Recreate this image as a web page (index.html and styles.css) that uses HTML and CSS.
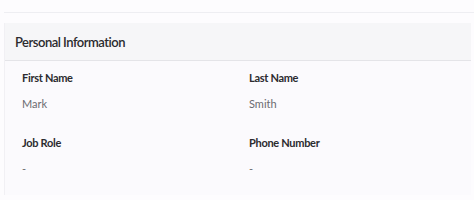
FILE: index.html
```html
<!DOCTYPE html>
<html lang="en">

<head>
    <meta charset="UTF-8">
    <meta name="viewport" content="width=device-width, initial-scale=1.0">
    <title>Profile</title>
    <link rel="stylesheet" href="styles.css">
</head>

<body>
    <div class="top-strip"></div>
    <div class="card">
        <div class="card-header">Personal Information</div>
        <div class="card-body">
            <div class="field">
                <div class="label">First Name</div>
                <div class="value">Mark</div>
            </div>
            <div class="field">
                <div class="label">Last Name</div>
                <div class="value">Smith</div>
            </div>
            <div class="field">
                <div class="label">Job Role</div>
                <div class="value">-</div>
            </div>
            <div class="field">
                <div class="label">Phone Number</div>
                <div class="value">-</div>
            </div>
        </div>
    </div>
</body>

</html>
```
FILE: styles.css
```css
body {
    margin: 0;
    background: #fdfcfe;
    font-family: Lato, 'Open Sans', sans-serif;
    color: #333;
}

.top-strip {
    height: 12px;
    margin: 0 0 0 4px;
    border-bottom: 1px solid #eeeef2;
}

.card {
    margin: 10px 3px 0 4px;
    background: #fbfafd;
    border-left: 1px solid #f1f0f4;
    height: 172px;
}

.card-header {
    height: 37px;
    padding: 0 10px;
    display: flex;
    align-items: center;
    background: #f6f6f8;
    border-bottom: 1px solid #e4e4e8;
    font-size: 13px;
    font-weight: 600;
    letter-spacing: -0.5px;
    color: #2b2b2f;
}

.card-body {
    display: grid;
    grid-template-columns: 227px 1fr;
    padding: 10px 0 0 17px;
    row-gap: 26px;
}

.label {
    font-size: 11px;
    font-weight: 700;
    letter-spacing: -0.3px;
    color: #2b2b2f;
}

.value {
    margin-top: 13px;
    font-size: 11px;
    color: #6b6b70;
}
```
